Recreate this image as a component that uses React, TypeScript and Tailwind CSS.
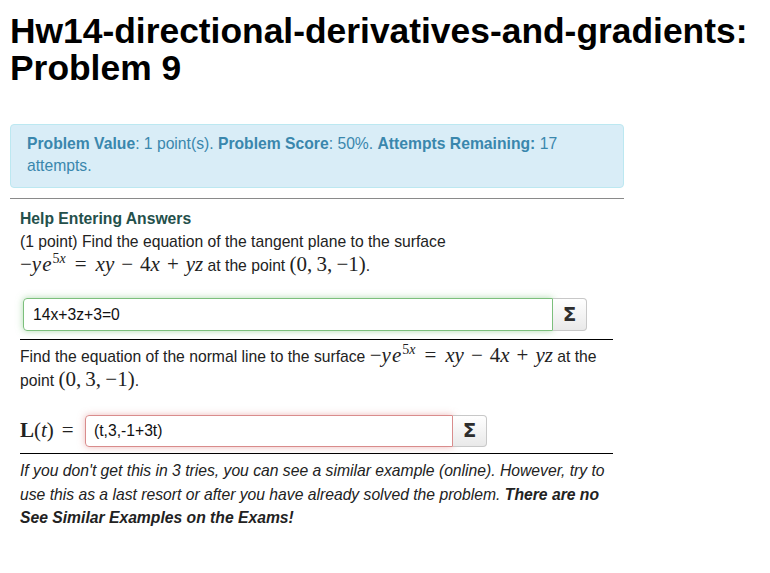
import React from "react";

const Op = ({ children, w }: { children: React.ReactNode; w: "rel" | "bin" }) => (
  <span className={w === "rel" ? "not-italic mx-[9px]" : "not-italic mx-[7px]"}>{children}</span>
);

const Surface = () => (
  <span className="whitespace-nowrap font-['Liberation_Serif',serif] text-[21px] leading-[0]">
    <span>−</span>
    <i className="mr-[1px]">y</i>
    <i>e</i>
    <span className="relative -top-[8px] ml-[1px] text-[14px]">
      5<i>x</i>
    </span>
    <Op w="rel">=</Op>
    <i>xy</i>
    <Op w="bin">−</Op>
    <span>4</span>
    <i>x</i>
    <Op w="bin">+</Op>
    <i>yz</i>
  </span>
);

const Point = () => (
  <span className="whitespace-nowrap font-['Liberation_Serif',serif] text-[21px] leading-[0]">
    (0,&#8201;3,&#8201;−1)
  </span>
);

const Sigma = () => (
  <button className="flex h-full w-[34px] items-center justify-center rounded-r-[4px] border border-l-0 border-[#c8c8c8] bg-gradient-to-b from-white to-[#e9e9e9] font-['DejaVu_Sans',sans-serif] text-[20px] font-bold text-[#2d2d2d]">
    Σ
  </button>
);

export default function App() {
  return (
    <div className="min-h-[573px] w-[770px] bg-white font-['Liberation_Sans',Arial,sans-serif] text-[15.7px] text-[#222]">
      <h1 className="px-[10px] pt-[13px] text-[35.4px] font-bold leading-[37.3px] text-black">
        Hw14-directional-derivatives-and-gradients:
        <br />
        Problem 9
      </h1>

      <div className="mx-[10px] mt-[36px] h-[64px] w-[614px] rounded-[4px] border border-[#bce8f1] bg-[#d9edf7] px-[16px] pt-[8px] leading-[22px] text-[#3a87ad]">
        <b>Problem Value</b>: 1 point(s). <b>Problem Score</b>: 50%. <b>Attempts Remaining:</b> 17
        attempts.
      </div>

      <div className="mx-[10px] mt-[10px] h-px w-[614px] bg-[#8a8a8a]" />

      <div className="mx-[20px] w-[593px] pt-[8px] leading-[23.5px]">
        <div className="font-bold text-[#24504b]">Help Entering Answers</div>
        <div>(1 point) Find the equation of the tangent plane to the surface</div>
        <div className="h-[23.5px]">
          <Surface /> at the point <Point />.
        </div>

        <div className="mt-[21px] flex h-[33px] pl-[3px]">
          <div className="flex h-full w-[530px] items-center rounded-l-[4px] border border-[#7cbf7c] px-[9px] text-[15.7px] text-[#111] shadow-[0_0_7px_rgba(110,190,110,0.55)]">
            14x+3z+3=0
          </div>
          <Sigma />
        </div>

        <div className="mt-[8px] h-px w-[593px] bg-black" />

        <div className="pt-[5px]">
          <div className="h-[23.5px]">
            Find the equation of the normal line to the surface <Surface /> at the
          </div>
          <div className="h-[23.5px]">
            point <Point />.
          </div>
        </div>

        <div className="mt-[23px] flex h-[32px] items-center">
          <span className="w-[65px] whitespace-nowrap font-['Liberation_Serif',serif] text-[21px]">
            <b>L</b>(<i>t</i>)<span className="ml-[8px]">=</span>
          </span>
          <div className="flex h-full w-[402px]">
            <div className="flex h-full w-[368px] items-center rounded-l-[4px] border border-[#d98c8c] px-[8px] text-[15.7px] text-[#111] shadow-[0_0_7px_rgba(220,120,120,0.5)]">
              (t,3,-1+3t)
            </div>
            <Sigma />
          </div>
        </div>

        <div className="mt-[6px] h-px w-[593px] bg-black" />

        <p className="pt-[5px] italic leading-[23.5px]">
          If you don't get this in 3 tries, you can see a similar example (online). However, try to
          use this as a last resort or after you have already solved the problem.{" "}
          <b>There are no See Similar Examples on the Exams!</b>
        </p>
      </div>
    </div>
  );
}
